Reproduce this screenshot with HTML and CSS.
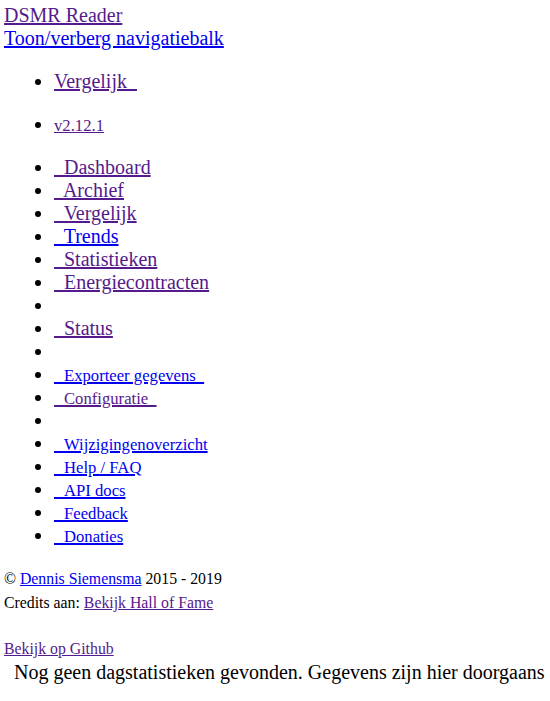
FILE: index.html
```html
<!DOCTYPE html>
<html lang="nl">
<head>
<meta charset="utf-8">
<title>DSMR Reader</title>
<link rel="stylesheet" href="styles.css">
</head>
<body>
<header class="main-header">
  <a class="logo visited" href="#">DSMR Reader</a>
  <nav class="navbar">
    <a class="toggle" href="#">Toon/verberg navigatiebalk</a>
    <ul class="menu">
      <li><a class="visited" href="#">Vergelijk&nbsp;&nbsp;</a></li>
    </ul>
    <ul class="menu">
      <li><a class="visited small" href="#">v2.12.1</a></li>
    </ul>
  </nav>
</header>
<aside class="sidebar">
  <ul class="menu">
    <li><a class="visited" href="#">&nbsp; Dashboard</a></li>
    <li><a class="visited" href="#">&nbsp; Archief</a></li>
    <li><a class="visited" href="#">&nbsp; Vergelijk</a></li>
    <li><a href="#">&nbsp; Trends</a></li>
    <li><a class="visited" href="#">&nbsp; Statistieken</a></li>
    <li><a class="visited" href="#">&nbsp; Energiecontracten</a></li>
    <li></li>
    <li><a class="visited" href="#">&nbsp; Status</a></li>
    <li></li>
    <li><a href="#">&nbsp; <span class="small">Exporteer gegevens&nbsp;&nbsp;</span></a></li>
    <li><a class="visited" href="#">&nbsp; <span class="small">Configuratie&nbsp;&nbsp;</span></a></li>
    <li></li>
    <li><a href="#">&nbsp; <span class="small">Wijzigingenoverzicht</span></a></li>
    <li><a href="#">&nbsp; <span class="small">Help / FAQ</span></a></li>
    <li><a href="#">&nbsp; <span class="small">API docs</span></a></li>
    <li><a href="#">&nbsp; <span class="small">Feedback</span></a></li>
    <li><a href="#">&nbsp; <span class="small">Donaties</span></a></li>
  </ul>
</aside>
<footer class="footer">
  <div class="footer-line">&copy; <a href="#">Dennis Siemensma</a> 2015 - 2019</div>
  <div class="footer-line">Credits aan: <a class="visited" href="#">Bekijk Hall of Fame</a></div>
  <div class="footer-line github"><a class="visited" href="#">Bekijk op Github</a></div>
</footer>
<section class="content">
  <p class="empty">Nog geen dagstatistieken gevonden. Gegevens zijn hier doorgaans</p>
</section>
</body>
</html>
```
FILE: styles.css
```css
html, body {
  margin: 0;
  padding: 0;
  background: #ffffff;
}

body {
  font-family: "Liberation Serif", "Times New Roman", serif;
  font-size: 20px;
  line-height: 23px;
  color: #000000;
  padding: 4px 0 0 4px;
  overflow: hidden;
}

a {
  color: #0000ee;
  text-decoration: underline;
}

a.visited {
  color: #551a8b;
}

.small {
  font-size: 16.67px;
}

.logo,
.toggle {
  display: block;
  width: max-content;
}

.menu {
  margin: 20px 0;
  padding-left: 50px;
  list-style: disc;
}

.menu li {
  height: 23px;
}

.footer {
  font-size: 15.8px;
}

.footer-line {
  line-height: 24px;
}

.github {
  margin-top: 22px;
}

.content {
  padding-left: 10px;
}

.empty {
  margin: 0;
  white-space: nowrap;
}
```
